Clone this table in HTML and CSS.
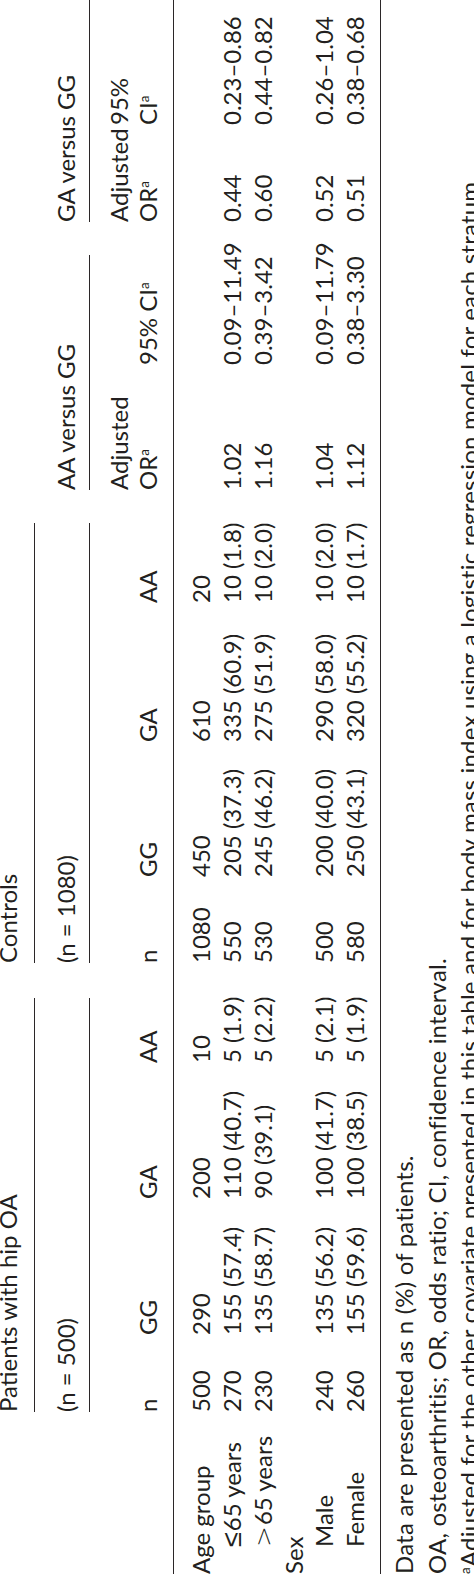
FILE: index.html
```html
<!DOCTYPE html>
<html lang="en">
<head>
<meta charset="utf-8">
<title>Genotype distribution by stratum</title>
<link rel="stylesheet" href="styles.css">
</head>
<body>
<div class="page">
  <div class="sheet">
    <div class="grid head">
      <div class="group g-pat">Patients with hip OA</div>
      <div class="group g-con">Controls</div>

      <div class="sub g-pat">(n = 500)</div>
      <div class="sub g-con">(n = 1080)</div>
      <div class="sub g-aa">AA versus GG</div>
      <div class="sub g-ga">GA versus GG</div>

      <div class="col"></div>
      <div class="col">n</div>
      <div class="col">GG</div>
      <div class="col">GA</div>
      <div class="col">AA</div>
      <div class="col">n</div>
      <div class="col">GG</div>
      <div class="col">GA</div>
      <div class="col">AA</div>
      <div class="col"><span>Adjusted</span><span>OR<span class="sup">a</span></span></div>
      <div class="col"><span>95% CI<span class="sup">a</span></span></div>
      <div class="col"><span>Adjusted</span><span>OR<span class="sup">a</span></span></div>
      <div class="col"><span>95%</span><span>CI<span class="sup">a</span></span></div>
    </div>

    <div class="grid body">
      <div class="lab">Age group</div>
      <div>500</div><div>290</div><div>200</div><div>10</div>
      <div>1080</div><div>450</div><div>610</div><div>20</div>

      <div class="lab ind"><span class="sym le">&le;</span>65 years</div>
      <div>270</div><div>155 (57.4)</div><div>110 (40.7)</div><div>5 (1.9)</div>
      <div>550</div><div>205 (37.3)</div><div>335 (60.9)</div><div>10 (1.8)</div>
      <div>1.02</div><div>0.09&ndash;11.49</div><div>0.44</div><div>0.23&ndash;0.86</div>

      <div class="lab ind"><span class="sym">&gt;</span>65 years</div>
      <div>230</div><div>135 (58.7)</div><div>90 (39.1)</div><div>5 (2.2)</div>
      <div>530</div><div>245 (46.2)</div><div>275 (51.9)</div><div>10 (2.0)</div>
      <div>1.16</div><div>0.39&ndash;3.42</div><div>0.60</div><div>0.44&ndash;0.82</div>

      <div class="lab">Sex</div>

      <div class="lab ind">Male</div>
      <div>240</div><div>135 (56.2)</div><div>100 (41.7)</div><div>5 (2.1)</div>
      <div>500</div><div>200 (40.0)</div><div>290 (58.0)</div><div>10 (2.0)</div>
      <div>1.04</div><div>0.09&ndash;11.79</div><div>0.52</div><div>0.26&ndash;1.04</div>

      <div class="lab ind">Female</div>
      <div>260</div><div>155 (59.6)</div><div>100 (38.5)</div><div>5 (1.9)</div>
      <div>580</div><div>250 (43.1)</div><div>320 (55.2)</div><div>10 (1.7)</div>
      <div>1.12</div><div>0.38&ndash;3.30</div><div>0.51</div><div>0.38&ndash;0.68</div>
    </div>

    <div class="notes">
      <p>Data are presented as n (%) of patients.</p>
      <p>OA, osteoarthritis; OR, odds ratio; CI, confidence interval.</p>
      <p><span class="sup">a</span>Adjusted for the other covariate presented in this table and for body mass index using a logistic regression model for each stratum.</p>
    </div>
  </div>
</div>
</body>
</html>
```

FILE: styles.css
```css
* { box-sizing: border-box; }

html, body {
  margin: 0;
  padding: 0;
  background: #ffffff;
}

.page {
  width: 474px;
  height: 1574px;
  overflow: hidden;
}

.sheet {
  width: 1574px;
  height: 474px;
  overflow: hidden;
  transform-origin: 0 0;
  transform: rotate(-90deg) translateX(-100%);
  display: flex;
  flex-direction: column;
  font-family: Lato, "Open Sans", "DejaVu Sans", sans-serif;
  color: #231f20;
  background: #ffffff;
}

.grid {
  display: grid;
  grid-template-columns: 162px 77px 136px 136px 100px 86px 135px 139px 113px 125px 143px 97px 200px;
  width: 1649px;
  flex: none;
  font-size: 24px;
  white-space: nowrap;
}

.head {
  margin-top: -7px;
  grid-template-rows: 42px 55px 83px;
  border-bottom: 1px solid #2b2728;
}

.group {
  grid-row: 1;
  line-height: 30px;
  border-bottom: 1px solid #2b2728;
}

.sub {
  grid-row: 2;
  padding-top: 16px;
  line-height: 30px;
  border-bottom: 1px solid #2b2728;
}

.g-pat { grid-column: 2 / 6; margin-right: 35px; }
.g-con { grid-column: 6 / 10; margin-right: 33px; }
.g-aa  { grid-column: 10 / 12; margin-right: 33px; }
.g-ga  { grid-column: 12 / 14; }

.col {
  grid-row: 3;
  display: flex;
  flex-direction: column;
  justify-content: flex-end;
  padding-bottom: 11px;
  line-height: 29px;
}

.sup {
  font-size: 0.56em;
  vertical-align: 0.62em;
  line-height: 0;
}

.body {
  grid-auto-rows: 30.8px;
  line-height: 30.8px;
  padding: 12.3px 0 8.9px;
  border-bottom: 1px solid #2b2728;
}

.lab { grid-column: 1; }
.ind { padding-left: 27px; }

.sym {
  font-family: "DejaVu Sans", sans-serif;
  font-weight: 200;
  font-size: 25px;
  line-height: 0;
  margin-right: 1px;
}

.sym.le {
  font-size: 27px;
}

.notes {
  padding-top: 7.5px;
  font-size: 24px;
  line-height: 32.5px;
  letter-spacing: 0.2px;
  white-space: nowrap;
}

.notes p { margin: 0; }
```
